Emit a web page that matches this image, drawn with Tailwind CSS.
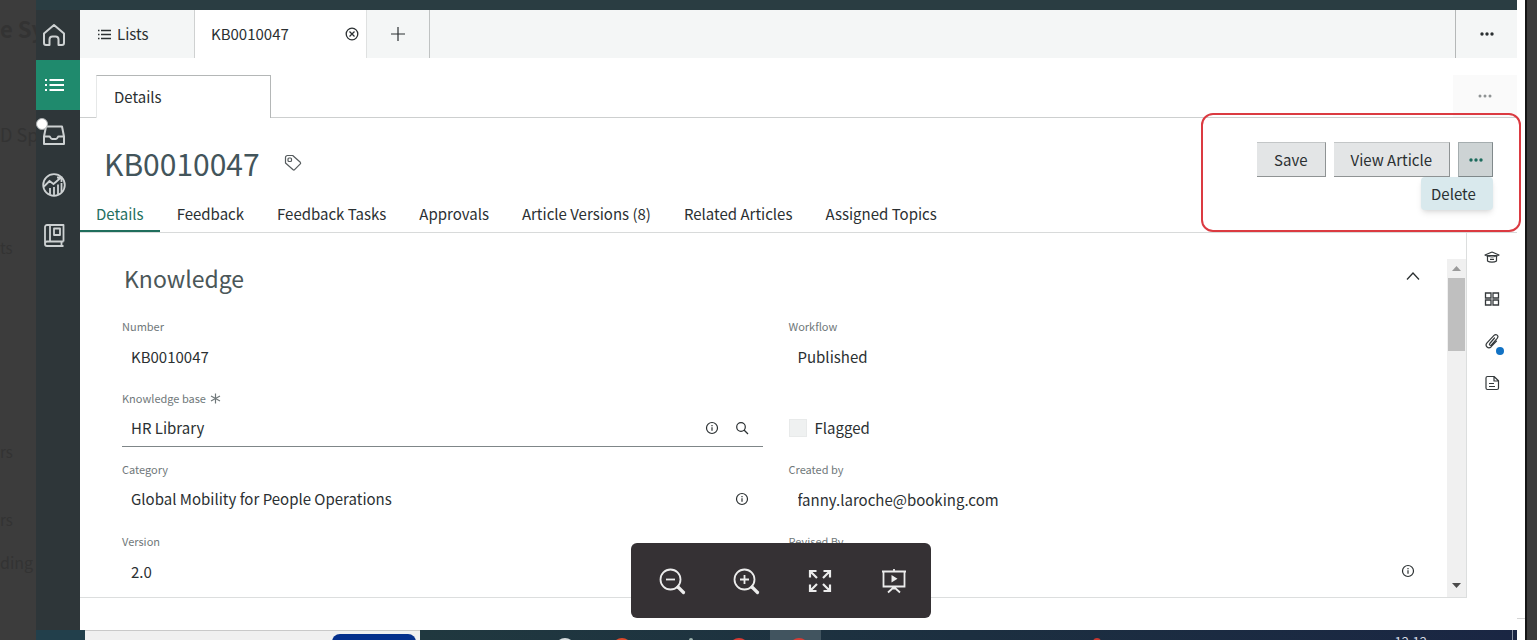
<!DOCTYPE html>
<html lang="en">
<head>
    <meta charset="UTF-8">
    <meta name="viewport" content="width=device-width, initial-scale=1.0">
    <title>KB0010047 | Knowledge</title>
    <script src="https://cdn.jsdelivr.net/npm/@tailwindcss/browser@4"></script>
    <style>
        body {
            font-family: 'Noto Sans CJK SC', 'Noto Sans', sans-serif;
        }
    </style>
</head>
<body class="flex h-screen overflow-hidden bg-[#3c3c3c] text-[15px] leading-5 text-[#2b3032]">

    <!-- Dimmed page behind the viewer -->
    <div class="w-9 shrink-0 overflow-hidden whitespace-nowrap text-[#333333]" aria-hidden="true">
        <p class="mt-4 text-[22px] font-bold leading-6">e Sy</p>
        <p class="mt-[82px] text-[18px] leading-6">D Sp</p>
        <p class="mt-[92px] text-[15px] leading-5">ts</p>
        <p class="mt-[184px] text-[15px] leading-5">rs</p>
        <p class="mt-12 text-[15px] leading-5">rs</p>
        <p class="mt-[22px] text-[16px] leading-5">ding</p>
    </div>

    <div class="relative flex min-w-0 flex-1 border-r-2 border-[#151515] bg-white">
        <div class="flex min-w-0 flex-1 flex-col">
            <div class="h-2.5 shrink-0 bg-[#2a3d42]"></div>

            <div class="flex min-h-0 flex-1">
                <!-- App navigation -->
                <nav class="flex w-11 shrink-0 flex-col bg-[#2e3639] text-[#cdd1d2]">
                    <a href="#" aria-label="Home" class="flex h-[50px] items-center justify-center pr-2">
                        <svg class="size-6" viewBox="0 0 24 24" fill="none" stroke="currentColor" stroke-width="2" stroke-linejoin="round"><path d="M2 10.500 12 2l10 8.500V20a2 2 0 0 1-2 2h-3.500v-5.500a3 3 0 0 0-3-3h-3a3 3 0 0 0-3 3V22H4a2 2 0 0 1-2-2z"/></svg>
                    </a>
                    <a href="#" aria-label="Lists" class="flex h-[50px] items-center justify-center bg-[#1f8a6d] pr-2 text-white">
                        <svg class="size-6" viewBox="0 0 24 24" fill="none" stroke="currentColor" stroke-width="2"><path d="M7.500 7H22M7.500 12H22M7.500 17H22M3 7h2M3 12h2M3 17h2"/></svg>
                    </a>
                    <a href="#" aria-label="Inbox" class="relative flex h-[50px] items-center justify-center pr-2">
                        <svg class="size-6" viewBox="0 0 24 24" fill="none" stroke="currentColor" stroke-width="2" stroke-linejoin="round"><path d="M4 3.500h16l2 10V21H2v-7.500zM2 13.500h5.500c.8 0 .9 2.500 2.500 2.500h4c1.600 0 1.700-2.500 2.500-2.500H22"/></svg>
                        <span class="absolute left-0 top-2 size-3 rounded-full border border-[#a9adae] bg-white"></span>
                    </a>
                    <a href="#" aria-label="Analytics" class="flex h-[50px] items-center justify-center pr-2">
                        <svg class="size-6" viewBox="0 0 24 24" fill="none" stroke="currentColor" stroke-width="1.800"><circle cx="12" cy="12" r="10.800"/><path d="M2 13.500 7.500 8l4 3L19 4.500M15 4.500h4.500V9M8 21.500V15M12 22.500V14M16 21.500V11.500M19.500 19V10"/></svg>
                    </a>
                    <a href="#" aria-label="Knowledge" class="flex h-[50px] items-center justify-center pr-2">
                        <svg class="size-6" viewBox="0 0 24 24" fill="none" stroke="currentColor" stroke-width="1.800" stroke-linejoin="round"><path d="M21.500 18.500V2H5a2 2 0 0 0-2 2v17a2 2 0 0 0 2 2h16.500M3 20.500c0-1.200.8-2 2-2h16.500M19.500 18.500V23M8 2v16.500M12 5.500h6V12h-6z"/></svg>
                    </a>
                </nav>

                <main class="flex min-w-0 flex-1 flex-col">
                    <!-- Workspace tabs -->
                    <div class="flex h-12 shrink-0 bg-[#f4f6f6]">
                        <a href="#" class="flex w-[115px] items-center gap-[5px] border-r border-[#cfd1d1] pl-[17px]">
                            <svg class="size-[15px]" viewBox="0 0 15 15" fill="none" stroke="currentColor" stroke-width="1.400"><path d="M4 3.500h10M4 7.500h10M4 11.500h10M1 3.500h1.500M1 7.500h1.500M1 11.500h1.500"/></svg>
                            Lists
                        </a>
                        <div class="flex w-[172px] items-center justify-between border-r border-[#dfe1e1] bg-white pl-4 pr-[7px]">
                            <a href="#">KB0010047</a>
                            <button type="button" aria-label="Close tab">
                                <svg class="size-[14px]" viewBox="0 0 14 14" fill="none" stroke="currentColor" stroke-width="1.300"><circle cx="7" cy="7" r="5.800"/><path d="m4.500 4.500 5 5M9.500 4.500l-5 5"/></svg>
                            </button>
                        </div>
                        <button type="button" aria-label="New tab" class="flex w-[63px] items-center justify-center border-r border-[#bfc2c2]">
                            <svg class="size-[14px]" viewBox="0 0 14 14" fill="none" stroke="currentColor" stroke-width="1.200"><path d="M7 0v14M0 7h14"/></svg>
                        </button>
                        <button type="button" aria-label="More tabs" class="ml-auto flex w-[62px] items-center justify-center border-l border-[#b5b8b8]">
                            <svg class="h-1 w-[14px]" viewBox="0 0 14 4" fill="currentColor"><circle cx="2" cy="2" r="1.700"/><circle cx="7" cy="2" r="1.700"/><circle cx="12" cy="2" r="1.700"/></svg>
                        </button>
                    </div>

                    <!-- Record sub tabs -->
                    <div class="flex h-[60px] shrink-0 items-end">
                        <div class="w-4 border-b border-[#cdcfcf]"></div>
                        <a href="#" class="flex h-[43px] w-[175px] items-center border-r border-t border-[#b4b7b7] border-l border-l-[#e6e8e8] pl-[17px]">Details</a>
                        <div class="flex h-[43px] flex-1 justify-end border-b border-[#cdcfcf]">
                            <button type="button" aria-label="More options" class="flex w-16 items-center justify-center bg-[#fafafa] text-[#8f9394]">
                                <svg class="h-1 w-[14px]" viewBox="0 0 14 4" fill="currentColor"><circle cx="2" cy="2" r="1.500"/><circle cx="7" cy="2" r="1.500"/><circle cx="12" cy="2" r="1.500"/></svg>
                            </button>
                        </div>
                    </div>

                    <!-- Record header -->
                    <header class="relative shrink-0 border-b border-[#d8dada]">
                        <div class="flex h-[82px] items-center px-6 pt-2">
                            <h1 class="text-[30px] leading-9 text-[#43555b]">KB0010047</h1>
                            <button type="button" aria-label="Add tag" class="ml-6 text-[#555b5d]">
                                <svg class="size-[18px]" viewBox="0 0 18 18" fill="none" stroke="currentColor" stroke-width="1.200" stroke-linejoin="round"><path d="M1.500 3.500a2 2 0 0 1 2-2h5.200l7.600 6.800c.5.500.5 1 0 1.500l-5.700 5.900c-.5.500-1 .5-1.500 0L1.500 9z"/><rect x="4" y="4" width="3.500" height="3.500" rx="1"/></svg>
                            </button>
                            <div class="ml-auto flex gap-2 self-start pt-4">
                                <button type="button" class="h-[35px] border-b border-r border-t border-[#c3c6c7] border-b-[#8f9394] border-r-[#8f9394] bg-[#e3e5e6] px-[17px]">Save</button>
                                <button type="button" class="h-[35px] border-b border-r border-t border-[#c3c6c7] border-b-[#8f9394] border-r-[#8f9394] bg-[#e3e5e6] px-[17px]">View Article</button>
                                <div class="relative">
                                    <button type="button" aria-label="More actions" aria-expanded="true" class="flex h-[35px] w-[35px] items-center justify-center border border-[#a5adaf] border-b-[#80898b] border-r-[#80898b] bg-[#cdd3d4] text-[#1d6b5d]">
                                        <svg class="h-1 w-[14px]" viewBox="0 0 14 4" fill="currentColor"><circle cx="2" cy="2" r="1.700"/><circle cx="7" cy="2" r="1.700"/><circle cx="12" cy="2" r="1.700"/></svg>
                                    </button>
                                    <div role="menu" class="absolute right-0 top-full z-10 rounded-sm bg-[#d9e9ed] shadow-md">
                                        <button type="button" role="menuitem" class="block h-[33px] w-[72px] pl-2.5 text-left">Delete</button>
                                    </div>
                                </div>
                            </div>
                        </div>
                        <div class="flex h-8 gap-px whitespace-nowrap">
                            <a href="#" class="h-8 border-b-2 border-[#1f6e5c] px-4 pt-1 text-[#256f5f]">Details</a>
                            <a href="#" class="px-4 pt-1">Feedback</a>
                            <a href="#" class="px-4 pt-1">Feedback Tasks</a>
                            <a href="#" class="px-4 pt-1">Approvals</a>
                            <a href="#" class="px-4 pt-1">Article Versions (8)</a>
                            <a href="#" class="px-4 pt-1">Related Articles</a>
                            <a href="#" class="px-4 pt-1">Assigned Topics</a>
                        </div>
                        <!-- Highlight around the actions -->
                        <div class="pointer-events-none absolute -right-1 -top-[5px] bottom-0 w-80 rounded-xl border-2 border-[#db3a41]"></div>
                    </header>

                    <div class="flex min-h-0 flex-1">
                        <div class="flex min-w-0 flex-1 border-b border-r border-[#dcdede] pt-[26px]">
                            <!-- Form -->
                            <section class="min-w-0 flex-1 overflow-hidden pl-[42px] pr-[18px]">
                                <div class="flex h-[58px] items-start justify-between pl-0.5 pr-[9px] pt-[5px]">
                                    <h2 class="text-[23px] leading-7 text-[#4b5759]">Knowledge</h2>
                                    <button type="button" aria-label="Collapse section" class="pt-1">
                                        <svg class="h-4 w-[14px]" viewBox="0 0 14 16" fill="none" stroke="currentColor" stroke-width="1.300"><path d="M1 11.500 7 5l6 6.500"/></svg>
                                    </button>
                                </div>
                                <div class="grid grid-cols-2 gap-x-[26px]">
                                    <div class="h-[72px]">
                                        <label for="number" class="block text-[11px] leading-[18px] text-[#70787a]">Number</label>
                                        <input id="number" type="text" value="KB0010047" readonly class="mt-1.5 block h-[30px] w-full px-[9px] outline-none">
                                    </div>
                                    <div class="h-[72px]">
                                        <label for="workflow" class="block text-[11px] leading-[18px] text-[#70787a]">Workflow</label>
                                        <input id="workflow" type="text" value="Published" readonly class="mt-1.5 block h-[30px] w-full px-[9px] outline-none">
                                    </div>
                                    <div class="h-[71px]">
                                        <label for="kb" class="flex items-center gap-1 text-[11px] leading-[18px] text-[#70787a]">
                                            Knowledge base
                                            <svg class="size-[11px]" viewBox="0 0 11 11" fill="none" stroke="currentColor" stroke-width="1.200"><path d="M5.500.5v10M1 3l9 5M10 3 1 8"/></svg>
                                        </label>
                                        <div class="mt-1 flex h-[36px] items-center gap-4 border-b border-[#7f8688] pb-px pr-[14px]">
                                            <input id="kb" type="text" value="HR Library" class="min-w-0 flex-1 pl-[9px] outline-none">
                                            <button type="button" aria-label="Preview record">
                                                <svg class="size-[14px]" viewBox="0 0 14 14" fill="none" stroke="currentColor" stroke-width="1.200"><circle cx="7" cy="7" r="5.500"/><path d="M7 6.300v3.500M7 4v1.200"/></svg>
                                            </button>
                                            <button type="button" aria-label="Search">
                                                <svg class="size-[14px]" viewBox="0 0 14 14" fill="none" stroke="currentColor" stroke-width="1.200"><circle cx="6" cy="6" r="4.300"/><path d="m9 9 4 4"/></svg>
                                            </button>
                                        </div>
                                    </div>
                                    <div class="flex h-[71px] items-start gap-2 pt-[29px]">
                                        <input id="flagged" type="checkbox" class="my-px size-[18px] appearance-none border border-[#e8eaea] bg-[#eff1f1]">
                                        <label for="flagged">Flagged</label>
                                    </div>
                                    <div class="h-[72px]">
                                        <label for="category" class="block text-[11px] leading-[18px] text-[#70787a]">Category</label>
                                        <div class="mt-1.5 flex h-[30px] items-center pr-[14px]">
                                            <input id="category" type="text" value="Global Mobility for People Operations" readonly class="min-w-0 flex-1 pl-[9px] outline-none">
                                            <button type="button" aria-label="Preview category">
                                                <svg class="size-[14px]" viewBox="0 0 14 14" fill="none" stroke="currentColor" stroke-width="1.200"><circle cx="7" cy="7" r="5.500"/><path d="M7 6.300v3.500M7 4v1.200"/></svg>
                                            </button>
                                        </div>
                                    </div>
                                    <div class="h-[72px]">
                                        <label for="created" class="block text-[11px] leading-[18px] text-[#70787a]">Created by</label>
                                        <input id="created" type="text" value="fanny.laroche@booking.com" readonly class="mt-1.5 block h-[30px] w-full px-[9px] outline-none">
                                    </div>
                                    <div class="h-[72px]">
                                        <label for="version" class="block text-[11px] leading-[18px] text-[#70787a]">Version</label>
                                        <input id="version" type="text" value="2.0" readonly class="mt-1.5 block h-[30px] w-full px-[9px] outline-none">
                                    </div>
                                    <div class="h-[72px]">
                                        <label for="revised" class="block text-[11px] leading-[18px] text-[#70787a]">Revised By</label>
                                        <div class="mt-1.5 flex h-[30px] items-center pr-[14px]">
                                            <input id="revised" type="text" readonly class="min-w-0 flex-1 pl-[9px] outline-none">
                                            <button type="button" aria-label="Preview user">
                                                <svg class="size-[14px]" viewBox="0 0 14 14" fill="none" stroke="currentColor" stroke-width="1.200"><circle cx="7" cy="7" r="5.500"/><path d="M7 6.300v3.500M7 4v1.200"/></svg>
                                            </button>
                                        </div>
                                    </div>
                                </div>
                            </section>
                            <!-- Scrollbar -->
                            <div class="flex w-[19px] shrink-0 flex-col items-center bg-[#f0f0f0]" aria-hidden="true">
                                <svg class="my-1.5 h-[7px] w-[9px] shrink-0 text-[#9a9a9a]" viewBox="0 0 9 7" fill="currentColor"><path d="M0 6 4.500 1 9 6z"/></svg>
                                <div class="h-[73px] w-[17px] bg-[#bfbfbf]"></div>
                                <svg class="mb-2 mt-auto h-[7px] w-[9px] shrink-0 text-[#4b4b4b]" viewBox="0 0 9 7" fill="currentColor"><path d="M0 1h9L4.500 6z"/></svg>
                            </div>
                        </div>

                        <!-- Contextual side bar -->
                        <aside class="flex w-[50px] shrink-0 flex-col items-center gap-[26px] pt-4 text-[#34393b]">
                            <button type="button" aria-label="Agent assist">
                                <svg class="size-4" viewBox="0 0 16 16" fill="none" stroke="currentColor" stroke-width="1.200" stroke-linejoin="round"><path d="M8 3 1 6l2.500 1.200M8 3l7 3-2.500 1.200M3.500 6.500h9V12c-2 1.500-7 1.500-9 0zM3.500 6.500C5 8.500 11 8.500 12.500 6.500M6 10.300h4"/></svg>
                            </button>
                            <button type="button" aria-label="Templates">
                                <svg class="size-4" viewBox="0 0 16 16" fill="none" stroke="currentColor" stroke-width="1.300"><path d="M1.500 2h5.500v5H1.500zM9 2h5.500v5H9zM1.500 9h5.500v5H1.500zM9 9h5.500v5H9z"/></svg>
                            </button>
                            <button type="button" aria-label="Attachments" class="relative">
                                <svg class="size-4" viewBox="0 0 16 16" fill="none" stroke="currentColor" stroke-width="1.200" stroke-linecap="round"><path d="M10.500 5 5.800 10.500c-1 1.300.5 2.500 1.600 1.400l5.800-6.600c2-2.500-1-5-3.200-2.900L3 9.800c-2.600 3.200 1.300 6.700 4.200 3.900l5.300-5.600"/></svg>
                                <span class="absolute -bottom-1.5 -right-1 size-2 rounded-full bg-[#1272c4]"></span>
                            </button>
                            <button type="button" aria-label="Documents">
                                <svg class="size-4" viewBox="0 0 16 16" fill="none" stroke="currentColor" stroke-width="1.200" stroke-linejoin="round"><path d="M3.500 1.500H10l4.500 4.300V13a1.500 1.500 0 0 1-1.500 1.500H3.500A1.500 1.500 0 0 1 2 13V3a1.500 1.500 0 0 1 1.500-1.500zM10 1.500V6h4.500M5 8.500h5M5 11.500h6"/></svg>
                            </button>
                        </aside>
                    </div>
                    <div class="h-8 shrink-0"></div>
                </main>
            </div>

            <!-- Desktop taskbar -->
            <div class="flex h-2.5 shrink-0 overflow-hidden bg-[#203640]">
                <div class="w-[49px] bg-[#223f4b]"></div>
                <div class="flex w-[335px] justify-end border-t border-[#c9c9c9] bg-[#f0f0f0] pr-1 pt-[3px]">
                    <div class="h-6 w-[84px] rounded-t-lg bg-[#05308c]"></div>
                </div>
                <div class="relative flex-1 bg-gradient-to-r from-[#20383f] via-[#1c2f40] to-[#1a2643]">
                    <span class="absolute left-[350px] top-0 h-full w-[51px] bg-[#41545f]"></span>
                    <span class="absolute left-[135px] top-2 size-5 rounded-full bg-[#d7dcde]"></span>
                    <span class="absolute left-[192px] top-2 size-5 rounded-full bg-[#dc4a2b]"></span>
                    <span class="absolute left-[269px] top-2 size-1 rounded-full bg-[#9db3ae]"></span>
                    <span class="absolute left-[309px] top-2 size-5 rounded-full bg-[#d83b34]"></span>
                    <span class="absolute left-[369px] top-2 size-5 rounded-full bg-[#d83b34]"></span>
                    <span class="absolute left-[673px] top-2 size-2 rounded-full bg-[#c9372f]"></span>
                    <span class="absolute right-[90px] top-1 text-[13px] leading-4 text-[#d5dae2]">12:12</span>
                    <span class="absolute right-1 top-0 h-full w-px bg-[#8a93a3]"></span>
                </div>
            </div>
        </div>
        <div class="flex w-2 shrink-0 items-end">
            <div class="h-[22px] w-full border-t border-[#d5d5d5]"></div>
        </div>

        <!-- Viewer controls -->
        <div class="absolute bottom-[22px] left-1/2 z-20 grid h-[75px] w-[300px] -translate-x-1/2 grid-cols-4 rounded-md bg-[#353134] pl-1 text-[#ececec]">
            <button type="button" aria-label="Zoom out" class="flex items-center justify-center">
                <svg class="size-7" viewBox="0 0 28 28" fill="none" stroke="currentColor" stroke-width="1.800"><circle cx="12.500" cy="12.500" r="10"/><path d="M8 12.500h9"/><path d="m20 20 5.500 5.500" stroke-width="3.200" stroke-linecap="round"/></svg>
            </button>
            <button type="button" aria-label="Zoom in" class="flex items-center justify-center">
                <svg class="size-7" viewBox="0 0 28 28" fill="none" stroke="currentColor" stroke-width="1.800"><circle cx="12.500" cy="12.500" r="10"/><path d="M8 12.500h9M12.500 8v9"/><path d="m20 20 5.500 5.500" stroke-width="3.200" stroke-linecap="round"/></svg>
            </button>
            <button type="button" aria-label="Full screen" class="flex items-center justify-center">
                <svg class="size-6" viewBox="0 0 24 24" fill="none" stroke="currentColor" stroke-width="2.200"><path d="M2 8.500V2h6.500M2 2l7 7M15.500 2H22v6.500M22 2l-7 7M2 15.500V22h6.500M2 22l7-7M15.500 22H22v-6.500M22 22l-7-7"/></svg>
            </button>
            <button type="button" aria-label="Present" class="flex items-center justify-center">
                <svg class="size-7" viewBox="0 0 28 28" fill="none" stroke="currentColor" stroke-width="1.800"><path d="M3.500 4.500h21v15h-21zM2 4.500h24M14 2v2.500M14 19.500v3M14 20l-6 5.500M14 20l6 5.500"/><path d="M11.500 8v7.500l6-3.700z" fill="currentColor" stroke="none"/></svg>
            </button>
        </div>
    </div>

    <div class="w-2.5 shrink-0"></div>
</body>
</html>
